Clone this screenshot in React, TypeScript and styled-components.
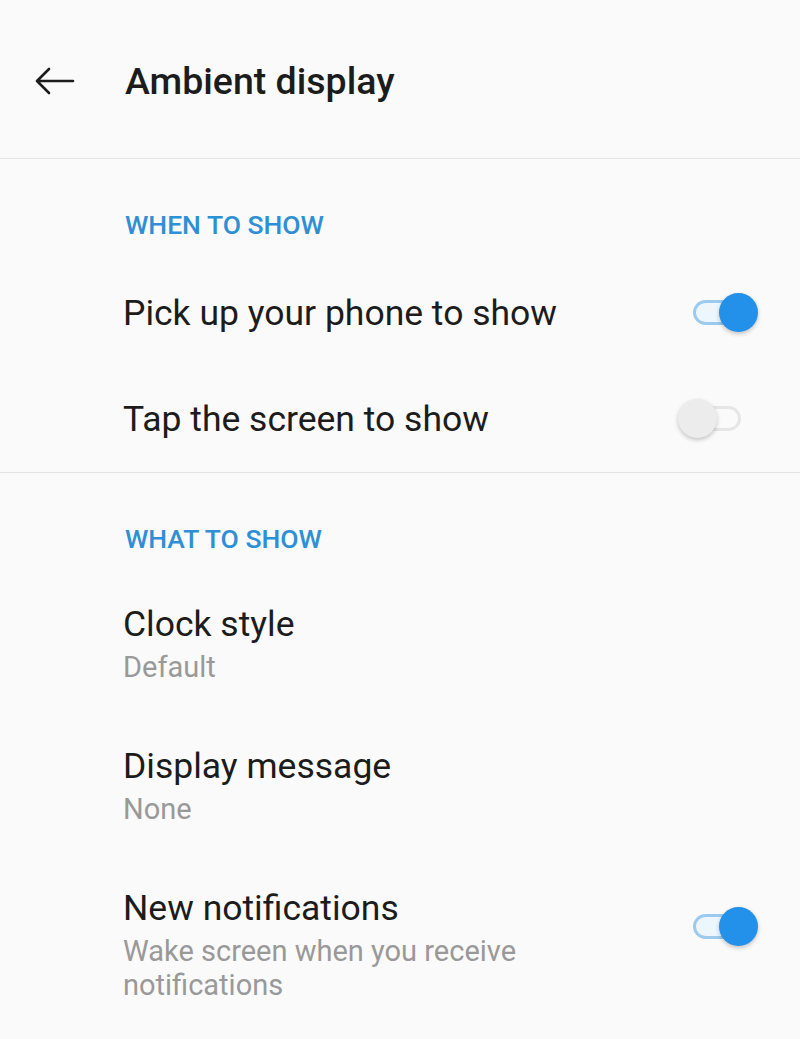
import styled, { createGlobalStyle } from "styled-components";

const GlobalStyle = createGlobalStyle`
    html, body {
        margin: 0;
        padding: 0;
        background: #fafafa;
    }
    body {
        font-family: Roboto, "Noto Sans", "Liberation Sans", sans-serif;
        -webkit-font-smoothing: antialiased;
    }
`

const Details = {
    Title: "Ambient display",
    Sections: [
        {
            Label: "WHEN TO SHOW",
            Rows: [
                { Title: "Pick up your phone to show", On: true },
                { Title: "Tap the screen to show", On: false },
            ],
        },
    ],
}

const Page = styled.div`
    width: 800px;
    min-height: 1039px;
    background: #fafafa;
    color: #1c1c1c;
`

const Header = styled.header`
    height: 159px;
    display: flex;
    align-items: center;
    border-bottom: 1px solid #e4e4e4;
    padding-top: 4px;
    box-sizing: border-box;
`

const BackButton = styled.button`
    width: 125px;
    height: 60px;
    display: flex;
    align-items: center;
    padding: 0 0 0 35px;
    border: none;
    background: none;
    box-sizing: border-box;
`

const Title = styled.h1`
    margin: 0;
    font-size: 37.5px;
    font-weight: 500;
    color: #1c1c1c;
`

const Section = styled.section<{ $divider?: boolean }>`
    padding-top: 51px;
    border-bottom: ${(p) => (p.$divider ? "1px solid #e4e4e4" : "none")};
`

const SectionLabel = styled.div<{ $gap?: number }>`
    padding-left: 125px;
    line-height: 30px;
    font-size: 26.5px;
    font-weight: 500;
    color: #2f8fd5;
    margin-bottom: ${(p) => p.$gap ?? 20}px;
`

const SwitchRow = styled.div`
    height: 106px;
    display: flex;
    align-items: center;
    justify-content: space-between;
    padding: 0 42px 0 123px;
`

const RowTitle = styled.div`
    font-size: 35.5px;
    line-height: 44px;
    color: #1c1c1c;
`

const RowSub = styled.div`
    margin-top: 4px;
    font-size: 29px;
    line-height: 34px;
    color: #999999;
`

const Item = styled.div`
    display: flex;
    align-items: flex-start;
    justify-content: space-between;
    padding: 30px 42px 30px 123px;
`

const ItemText = styled.div`
    max-width: 420px;
`

const ItemSwitch = styled.div`
    margin-top: 21px;
`

const Switch = styled.div`
    position: relative;
    width: 80px;
    height: 40px;
    flex-shrink: 0;
`

const Track = styled.div<{ $on: boolean }>`
    position: absolute;
    left: ${(p) => (p.$on ? "15px" : "7px")};
    top: 7px;
    width: 56px;
    height: 25px;
    border-radius: 13px;
    box-sizing: border-box;
    border: 3px solid ${(p) => (p.$on ? "#9ccaef" : "#e6e6e6")};
    background: ${(p) => (p.$on ? "#eef6fd" : "#fafafa")};
`

const Thumb = styled.div<{ $on: boolean }>`
    position: absolute;
    top: 0;
    ${(p) => (p.$on ? "right: 0;" : "left: 0;")}
    width: 39px;
    height: 39px;
    border-radius: 50%;
    background: ${(p) => (p.$on ? "#2390ea" : "#ececec")};
    box-shadow: 0 2px 4px rgba(0, 0, 0, 0.22);
`

function Toggle({ on }: { on: boolean }) {
    return (
        <Switch>
            <Track $on={on} />
            <Thumb $on={on} />
        </Switch>
    )
}

function BackArrow() {
    return (
        <svg width="40" height="30" viewBox="0 0 40 30" fill="none">
            <path d="M2 15H38M14 3L2 15L14 27" stroke="#1c1c1c" strokeWidth="2.6" strokeLinecap="round" strokeLinejoin="round" />
        </svg>
    )
}

export default function App() {
    return (
        <Page>
            <GlobalStyle />
            <Header>
                <BackButton aria-label="Back">
                    <BackArrow />
                </BackButton>
                <Title>{Details.Title}</Title>
            </Header>

            {Details.Sections.map((section, index) => (
                <Section key={index} $divider>
                    <SectionLabel>{section.Label}</SectionLabel>
                    {section.Rows.map((row, i) => (
                        <SwitchRow key={i}>
                            <RowTitle>{row.Title}</RowTitle>
                            <Toggle on={row.On} />
                        </SwitchRow>
                    ))}
                </Section>
            ))}

            <Section>
                <SectionLabel $gap={18}>WHAT TO SHOW</SectionLabel>
                <Item>
                    <ItemText>
                        <RowTitle>Clock style</RowTitle>
                        <RowSub>Default</RowSub>
                    </ItemText>
                </Item>
                <Item>
                    <ItemText>
                        <RowTitle>Display message</RowTitle>
                        <RowSub>None</RowSub>
                    </ItemText>
                </Item>
                <Item>
                    <ItemText>
                        <RowTitle>New notifications</RowTitle>
                        <RowSub>Wake screen when you receive notifications</RowSub>
                    </ItemText>
                    <ItemSwitch>
                        <Toggle on />
                    </ItemSwitch>
                </Item>
            </Section>
        </Page>
    );
}
